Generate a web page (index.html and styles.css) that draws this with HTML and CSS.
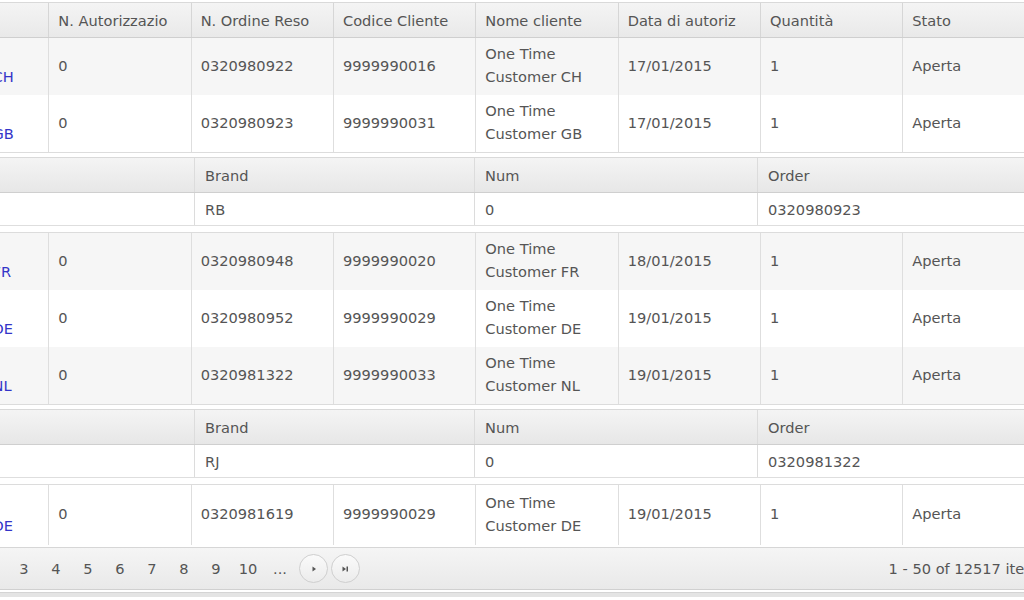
FILE: index.html
```html
<!DOCTYPE html>
<html lang="it">
<head>
<meta charset="utf-8">
<title>Autorizzazioni reso</title>
<link rel="stylesheet" href="styles.css">
</head>
<body>
<div class="grid">
  <div class="row head">
    <div class="cell">Cliente</div>
    <div class="cell">N. Autorizzazio</div>
    <div class="cell">N. Ordine Reso</div>
    <div class="cell">Codice Cliente</div>
    <div class="cell">Nome cliente</div>
    <div class="cell">Data di autoriz</div>
    <div class="cell">Quantità</div>
    <div class="cell">Stato</div>
  </div>

  <div class="row alt">
    <div class="cell"><a class="link">One Time Customer CH</a></div>
    <div class="cell">0</div>
    <div class="cell">0320980922</div>
    <div class="cell">9999990016</div>
    <div class="cell">One Time Customer CH</div>
    <div class="cell">17/01/2015</div>
    <div class="cell">1</div>
    <div class="cell">Aperta</div>
  </div>
  <div class="row">
    <div class="cell"><a class="link">One Time Customer GB</a></div>
    <div class="cell">0</div>
    <div class="cell">0320980923</div>
    <div class="cell">9999990031</div>
    <div class="cell">One Time Customer GB</div>
    <div class="cell">17/01/2015</div>
    <div class="cell">1</div>
    <div class="cell">Aperta</div>
  </div>

  <div class="detail">
    <div class="drow dhead">
      <div class="dcell"></div>
      <div class="dcell">Brand</div>
      <div class="dcell">Num</div>
      <div class="dcell">Order</div>
    </div>
    <div class="drow">
      <div class="dcell"></div>
      <div class="dcell">RB</div>
      <div class="dcell">0</div>
      <div class="dcell">0320980923</div>
    </div>
  </div>

  <div class="row alt">
    <div class="cell"><a class="link">One Time Customer FR</a></div>
    <div class="cell">0</div>
    <div class="cell">0320980948</div>
    <div class="cell">9999990020</div>
    <div class="cell">One Time Customer FR</div>
    <div class="cell">18/01/2015</div>
    <div class="cell">1</div>
    <div class="cell">Aperta</div>
  </div>
  <div class="row">
    <div class="cell"><a class="link">One Time Customer DE</a></div>
    <div class="cell">0</div>
    <div class="cell">0320980952</div>
    <div class="cell">9999990029</div>
    <div class="cell">One Time Customer DE</div>
    <div class="cell">19/01/2015</div>
    <div class="cell">1</div>
    <div class="cell">Aperta</div>
  </div>
  <div class="row alt">
    <div class="cell"><a class="link">One Time Customer NL</a></div>
    <div class="cell">0</div>
    <div class="cell">0320981322</div>
    <div class="cell">9999990033</div>
    <div class="cell">One Time Customer NL</div>
    <div class="cell">19/01/2015</div>
    <div class="cell">1</div>
    <div class="cell">Aperta</div>
  </div>

  <div class="detail">
    <div class="drow dhead">
      <div class="dcell"></div>
      <div class="dcell">Brand</div>
      <div class="dcell">Num</div>
      <div class="dcell">Order</div>
    </div>
    <div class="drow">
      <div class="dcell"></div>
      <div class="dcell">RJ</div>
      <div class="dcell">0</div>
      <div class="dcell">0320981322</div>
    </div>
  </div>

  <div class="row last">
    <div class="cell"><a class="link">One Time Customer DE</a></div>
    <div class="cell">0</div>
    <div class="cell">0320981619</div>
    <div class="cell">9999990029</div>
    <div class="cell">One Time Customer DE</div>
    <div class="cell">19/01/2015</div>
    <div class="cell">1</div>
    <div class="cell">Aperta</div>
  </div>

  <div class="pager">
    <span class="page">1</span>
    <span class="page">2</span>
    <span class="page">3</span>
    <span class="page">4</span>
    <span class="page">5</span>
    <span class="page">6</span>
    <span class="page">7</span>
    <span class="page">8</span>
    <span class="page">9</span>
    <span class="page">10</span>
    <span class="page">...</span>
    <span class="btn" aria-label="next">
      <svg width="8" height="8" viewBox="0 0 8 8"><path d="M2.5 1.5 L6 4 L2.5 6.5 Z" fill="#555"/></svg>
    </span>
    <span class="btn" aria-label="last">
      <svg width="9" height="8" viewBox="0 0 9 8"><path d="M1.5 1.5 L5 4 L1.5 6.5 Z" fill="#555"/><rect x="5.5" y="1.5" width="1.5" height="5" fill="#555"/></svg>
    </span>
    <span class="info">1 - 50 of 12517 items</span>
  </div>
  <div class="foot"></div>
</div>
</body>
</html>
```

FILE: styles.css
```css
html, body {
  margin: 0;
  padding: 0;
  background: #ffffff;
  overflow: hidden;
}

body {
  font-family: "DejaVu Sans", Verdana, sans-serif;
  font-size: 14.6px;
  color: #555555;
  padding-top: 2px;
}

.grid {
  margin-left: -93px;
  width: 1139px;
  border-top: 1px solid #d9d9d9;
}

.row {
  display: grid;
  grid-template-columns: repeat(8, 142.33px);
  height: 57px;
  background: #ffffff;
}

.row.alt {
  background: #f6f6f6;
}

.row.last {
  height: 60px;
}

.cell {
  display: flex;
  align-items: center;
  padding: 0 10px 0 9px;
  border-right: 1px solid #dedede;
  line-height: 23px;
  overflow: hidden;
  box-sizing: border-box;
}

.row:not(.head) .cell {
  padding-bottom: 3px;
}

.row.head {
  height: 34px;
  background: linear-gradient(#f4f4f4, #e9e9e9);
  border-bottom: 1px solid #cfcfcf;
}

.row.head .cell {
  white-space: nowrap;
  border-right-color: #d6d6d6;
  padding-top: 1px;
}

.link {
  color: #3434c8;
  text-decoration: none;
  padding-left: 1px;
}

.detail {
  padding: 4px 0 6px 0;
  border-top: 1px solid #dcdcdc;
  border-bottom: 1px solid #dcdcdc;
  background: #ffffff;
}

.drow {
  display: grid;
  grid-template-columns: 288px 280px 283px 1fr;
  height: 32px;
  background: #ffffff;
  border-bottom: 1px solid #dedede;
}

.drow.dhead {
  height: 34px;
  background: linear-gradient(#f4f4f4, #e7e7e7);
  border-top: 1px solid #d9d9d9;
  border-bottom: 1px solid #cfcfcf;
}

.dcell {
  display: flex;
  align-items: center;
  padding: 0 10px;
  border-right: 1px solid #dcdcdc;
  box-sizing: border-box;
  white-space: nowrap;
}

.pager {
  display: flex;
  align-items: center;
  height: 41px;
  margin-top: 2px;
  padding-left: 37px;
  background: linear-gradient(#f5f5f5, #e9e9e9);
  border-top: 1px solid #d6d6d6;
  border-bottom: 1px solid #d0d0d0;
}

.page {
  width: 32px;
  text-align: center;
}

.btn {
  width: 27px;
  height: 27px;
  margin-left: 3px;
  border: 1px solid #cfcfcf;
  border-radius: 50%;
  display: flex;
  align-items: center;
  justify-content: center;
  background: linear-gradient(#fafafa, #ececec);
}

.btn + .btn {
  margin-left: 3px;
}

.info {
  margin-left: auto;
  padding-right: 0;
  white-space: nowrap;
}

.foot {
  height: 4px;
  margin-top: 2px;
  background: #e4e4e4;
  border-top: 1px solid #d4d4d4;
}
```
